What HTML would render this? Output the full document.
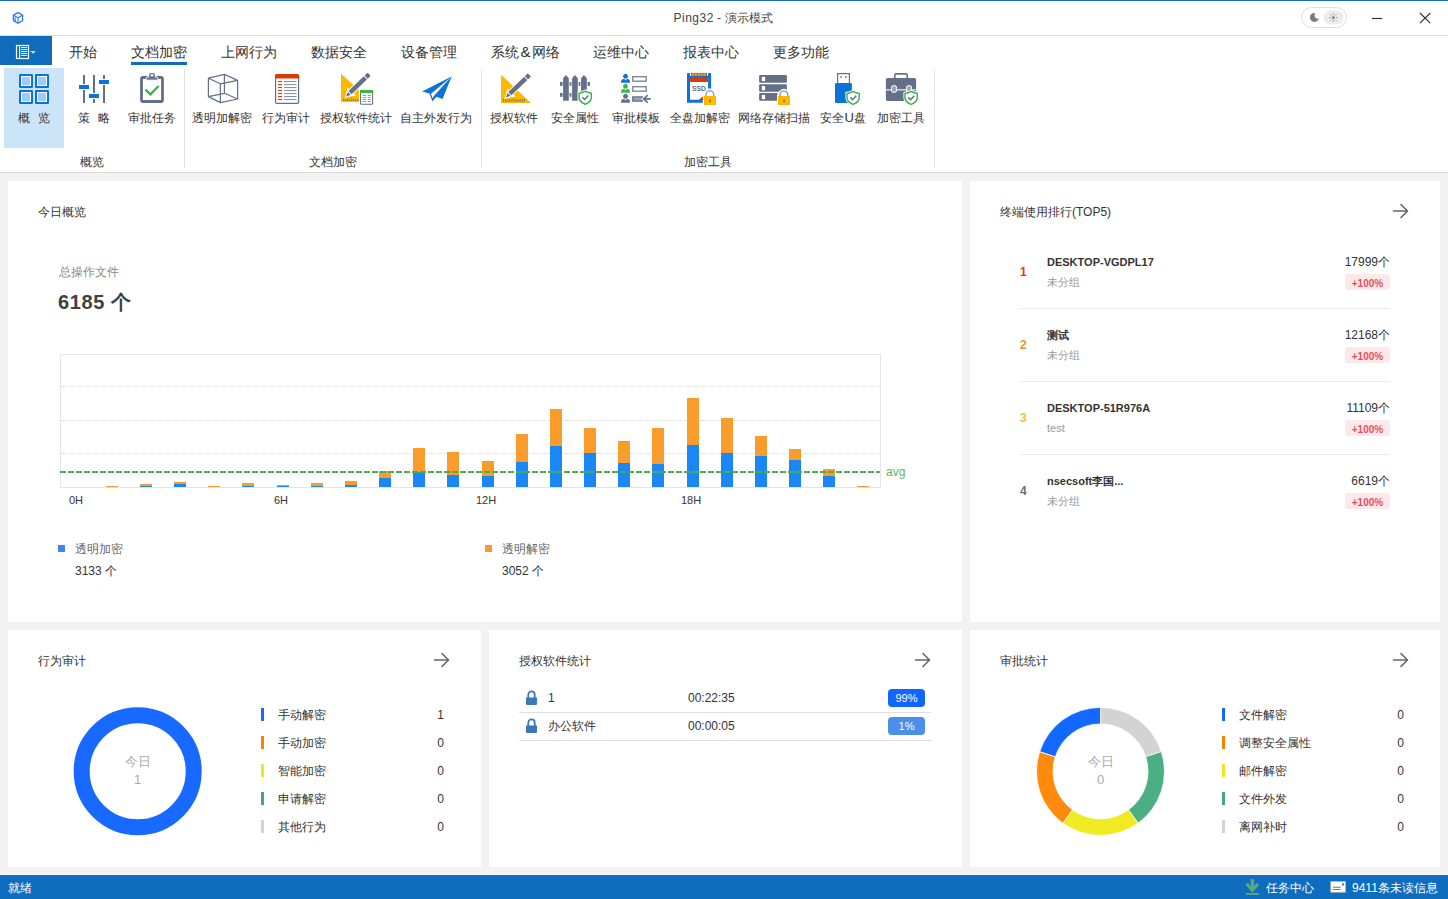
<!DOCTYPE html>
<html><head><meta charset="utf-8">
<style>
*{box-sizing:border-box}
body{margin:0;width:1448px;height:899px;position:relative;overflow:hidden;background:#f2f2f2;font-family:"Liberation Sans",sans-serif;color:#333}
.a{position:absolute}
.t{position:absolute;white-space:nowrap;font-size:12px;line-height:12px}
.card{position:absolute;background:#fff}
svg{position:absolute;overflow:visible}
</style></head><body>
<!-- title bar -->
<div class="a" style="left:0;top:0;width:1448px;height:35px;background:#fff;border-top:1px solid #1a6fc4"></div>
<div class="a" style="left:0;top:35px;width:1448px;height:1px;background:#dcdcdc"></div>
<div class="t" style="left:673.5px;top:12px;color:#444;letter-spacing:0.5px">Ping32</div><div class="t" style="left:717px;top:12px;color:#444">-</div><div class="t" style="left:724.5px;top:12px;color:#444">演示模式</div>
<!-- menu row + ribbon -->
<div class="a" style="left:0;top:36px;width:1448px;height:136px;background:#fff"></div>
<div class="a" style="left:0;top:172px;width:1448px;height:1px;background:#dadada"></div>
<div class="a" style="left:0;top:36px;width:52px;height:29px;background:#0f6cbd"></div>
<!-- tabs -->
<div class="t" style="left:69px;top:45px;font-size:14px;line-height:14px">开始</div>
<div class="t" style="left:131px;top:45px;font-size:14px;line-height:14px">文档加密</div>
<div class="a" style="left:131px;top:62px;width:56px;height:3px;background:#0f6cbd"></div>
<div class="t" style="left:221px;top:45px;font-size:14px;line-height:14px">上网行为</div>
<div class="t" style="left:311px;top:45px;font-size:14px;line-height:14px">数据安全</div>
<div class="t" style="left:401px;top:45px;font-size:14px;line-height:14px">设备管理</div>
<div class="t" style="left:491px;top:45px;font-size:14px;line-height:14px">系统</div><div class="t" style="left:520.5px;top:45px;font-size:15px;line-height:14px">&amp;</div><div class="t" style="left:531.5px;top:45px;font-size:14px;line-height:14px">网络</div>
<div class="t" style="left:593px;top:45px;font-size:14px;line-height:14px">运维中心</div>
<div class="t" style="left:683px;top:45px;font-size:14px;line-height:14px">报表中心</div>
<div class="t" style="left:773px;top:45px;font-size:14px;line-height:14px">更多功能</div>
<!-- ribbon -->
<div class="a" style="left:4px;top:68px;width:60px;height:80px;background:#cce4f7"></div>
<div class="a" style="left:184px;top:69px;width:1px;height:99px;background:#e2e2e2"></div>
<div class="a" style="left:481px;top:69px;width:1px;height:99px;background:#e2e2e2"></div>
<div class="a" style="left:934px;top:69px;width:1px;height:99px;background:#e2e2e2"></div>
<div class="t" style="left:18px;top:112px">概</div><div class="t" style="left:38px;top:112px">览</div>
<div class="t" style="left:78px;top:112px">策</div><div class="t" style="left:98px;top:112px">略</div>
<div class="t" style="left:128px;top:112px">审批任务</div>
<div class="t" style="left:80px;top:156px">概览</div>
<div class="t" style="left:192px;top:112px">透明加解密</div>
<div class="t" style="left:262px;top:112px">行为审计</div>
<div class="t" style="left:320px;top:112px">授权软件统计</div>
<div class="t" style="left:400px;top:112px">自主外发行为</div>
<div class="t" style="left:309px;top:156px">文档加密</div>
<div class="t" style="left:490px;top:112px">授权软件</div>
<div class="t" style="left:551px;top:112px">安全属性</div>
<div class="t" style="left:612px;top:112px">审批模板</div>
<div class="t" style="left:670px;top:112px">全盘加解密</div>
<div class="t" style="left:738px;top:112px">网络存储扫描</div>
<div class="t" style="left:820px;top:112px">安全</div><div class="t" style="left:844.5px;top:112px;font-size:13px">U</div><div class="t" style="left:854px;top:112px">盘</div>
<div class="t" style="left:877px;top:112px">加密工具</div>
<div class="t" style="left:684px;top:156px">加密工具</div>
<!--ICONS--><svg class="a" style="left:0;top:0" width="1448" height="899" viewBox="0 0 1448 899"><path d="M18 12.6L22.6 15.2V20.6L18 23.2L13.4 20.6V15.2Z" fill="none" stroke="#2b7cf0" stroke-width="1.3"/><path d="M13.6 15.3L18 17.8L22.4 15.3M18 17.8V23" fill="none" stroke="#2b7cf0" stroke-width="1.1"/><path d="M15.2 17.5V21.2" stroke="#2b7cf0" stroke-width="1.2"/><rect x="16.5" y="45.5" width="12" height="13" fill="none" stroke="#fff" stroke-width="1.2"/><line x1="19.6" y1="45.5" x2="19.6" y2="58.5" stroke="#fff" stroke-width="1.1"/><line x1="21" y1="47.5" x2="27.2" y2="47.5" stroke="#fff" stroke-width="0.9"/><line x1="21" y1="49.5" x2="27.2" y2="49.5" stroke="#fff" stroke-width="0.9"/><line x1="21" y1="51.5" x2="27.2" y2="51.5" stroke="#fff" stroke-width="0.9"/><line x1="21" y1="53.5" x2="27.2" y2="53.5" stroke="#fff" stroke-width="0.9"/><line x1="21" y1="55.5" x2="27.2" y2="55.5" stroke="#fff" stroke-width="0.9"/><path d="M30.3 51L35.9 51L33.1 53.9Z" fill="#fff" opacity="0.75"/><rect x="19" y="74" width="14" height="14" rx="1.2" fill="#0a72d8"/><rect x="21" y="76" width="10" height="10" fill="#fff"/><rect x="22" y="77" width="8" height="8" fill="#9bcbff"/><rect x="35" y="74" width="14" height="14" rx="1.2" fill="#0a72d8"/><rect x="37" y="76" width="10" height="10" fill="#fff"/><rect x="38" y="77" width="8" height="8" fill="#9bcbff"/><rect x="19" y="90" width="14" height="14" rx="1.2" fill="#0a72d8"/><rect x="21" y="92" width="10" height="10" fill="#fff"/><rect x="22" y="93" width="8" height="8" fill="#9bcbff"/><rect x="35" y="90" width="14" height="14" rx="1.2" fill="#0a72d8"/><rect x="37" y="92" width="10" height="10" fill="#fff"/><rect x="38" y="93" width="8" height="8" fill="#9bcbff"/><rect x="83" y="75" width="2" height="28" fill="#637087"/><rect x="93" y="75" width="2" height="28" fill="#637087"/><rect x="103" y="75" width="2" height="28" fill="#637087"/><rect x="79" y="84" width="10" height="6" fill="#fff"/><rect x="79" y="85" width="10" height="4" fill="#0a72d8"/><rect x="89" y="93" width="10" height="6" fill="#fff"/><rect x="89" y="94" width="10" height="4" fill="#0a72d8"/><rect x="99" y="79" width="10" height="6" fill="#fff"/><rect x="99" y="80" width="10" height="4" fill="#0a72d8"/><rect x="141.5" y="77.5" width="21" height="24" rx="1.5" fill="none" stroke="#637087" stroke-width="2.8"/><path d="M145.5 80.2H158.5L156.8 76.8H147.2Z" fill="#637087" stroke="#fff" stroke-width="1"/><rect x="149.8" y="73.6" width="4.4" height="3.6" rx="1.2" fill="none" stroke="#637087" stroke-width="1.4"/><path d="M145.4 89.6L150.4 94.4L158.6 86" fill="none" stroke="#3cb44b" stroke-width="2.4"/><path d="M224.4 74.4L208.4 78.2M208.4 78.2L220.4 83.8M220.4 83.8L237.6 80.4M237.6 80.4L224.4 74.4M208.4 78.2L208.4 96.6M220.4 83.8L220.4 102.6M237.6 80.4L237.6 99M224.4 74.4L224.4 93.3M208.4 96.6L220.4 102.6M220.4 102.6L237.6 99M237.6 99L224.4 93.3M224.4 93.3L208.4 96.6" fill="none" stroke="#637087" stroke-width="1.2" stroke-linecap="round"/><rect x="275.6" y="74.6" width="23" height="28.8" rx="1.2" fill="#fff" stroke="#637087" stroke-width="1.2"/><path d="M275 76.2Q275 74 277 74H297.2Q299.2 74 299.2 76.2V78.4H275Z" fill="#da3b01"/><rect x="278" y="81" width="4" height="1.1" fill="#da3b01"/><rect x="284" y="81" width="12.5" height="1.1" fill="#8592a5"/><rect x="278" y="84" width="4" height="1.1" fill="#da3b01"/><rect x="284" y="84" width="12.5" height="1.1" fill="#8592a5"/><rect x="278" y="87" width="4" height="1.1" fill="#da3b01"/><rect x="284" y="87" width="12.5" height="1.1" fill="#8592a5"/><rect x="278" y="90" width="4" height="1.1" fill="#da3b01"/><rect x="284" y="90" width="12.5" height="1.1" fill="#8592a5"/><rect x="278" y="93" width="4" height="1.1" fill="#da3b01"/><rect x="284" y="93" width="12.5" height="1.1" fill="#8592a5"/><rect x="278" y="96" width="4" height="1.1" fill="#da3b01"/><rect x="284" y="96" width="12.5" height="1.1" fill="#8592a5"/><rect x="278" y="99" width="4" height="1.1" fill="#da3b01"/><rect x="284" y="99" width="12.5" height="1.1" fill="#8592a5"/><path d="M341 73.8L359 90V102H341Z" fill="#ffb700"/><path d="M347.4 87.2L345.6 97.2L356 95.6Z" fill="#fff"/><rect x="343.3" y="98.4" width="0.9" height="2.6" fill="#637087"/><rect x="345.3" y="99" width="0.9" height="2" fill="#637087"/><rect x="347.3" y="99" width="0.9" height="2" fill="#637087"/><rect x="349.3" y="99" width="0.9" height="2" fill="#637087"/><rect x="351.3" y="98.4" width="0.9" height="2.6" fill="#637087"/><rect x="353.3" y="99" width="0.9" height="2" fill="#637087"/><rect x="355.3" y="99" width="0.9" height="2" fill="#637087"/><rect x="357.3" y="99" width="0.9" height="2" fill="#637087"/><g transform="translate(346 96.6) rotate(-44)"><path d="M0 0L5 -2.25H31.200000000000003Q32.2 -2.25 32.2 -1.25V1.25Q32.2 2.25 31.200000000000003 2.25H5Z" fill="#fff" stroke="#fff" stroke-width="2"/><path d="M0 0L5 -2.25H31.200000000000003Q32.2 -2.25 32.2 -1.25V1.25Q32.2 2.25 31.200000000000003 2.25H5Z" fill="#637087"/><rect x="4.6" y="-3" width="1" height="6" fill="#fff"/><rect x="27.000000000000004" y="-3" width="1" height="6" fill="#fff"/></g><rect x="359.6" y="89.6" width="14" height="15.6" fill="#fff"/><rect x="360.6" y="90.6" width="12" height="13.6" rx="1" fill="#fff" stroke="#637087" stroke-width="1.1"/><rect x="360" y="90" width="13.2" height="3" fill="#3cb44b"/><rect x="362.8" y="95" width="3.2" height="0.9" fill="#8592a5"/><rect x="367.6" y="95" width="3.2" height="0.9" fill="#8592a5"/><rect x="362.8" y="97" width="3.2" height="0.9" fill="#8592a5"/><rect x="367.6" y="97" width="3.2" height="0.9" fill="#8592a5"/><rect x="362.8" y="99" width="3.2" height="0.9" fill="#8592a5"/><rect x="367.6" y="99" width="3.2" height="0.9" fill="#8592a5"/><rect x="362.8" y="101" width="3.2" height="0.9" fill="#8592a5"/><rect x="367.6" y="101" width="3.2" height="0.9" fill="#8592a5"/><path d="M451.6 76.4L422.1 91.4L429.6 93.6L432.4 101.5L436.3 96.8L442.6 99.1Z" fill="#0a72d8"/><path d="M431 93.7L450.6 77.4L433.4 96.4L432.6 98.6Z" fill="#fff"/><path d="M501 74.8L531 103H501Z" fill="#ffb700"/><path d="M507.4 88.2L505.4 98L515.6 96.6Z" fill="#fff"/><rect x="503.2" y="98.8" width="0.9" height="3" fill="#637087"/><rect x="505.26" y="99.3" width="0.9" height="2.5" fill="#637087"/><rect x="507.32" y="99.3" width="0.9" height="2.5" fill="#637087"/><rect x="509.38" y="99.3" width="0.9" height="2.5" fill="#637087"/><rect x="511.44" y="99.3" width="0.9" height="2.5" fill="#637087"/><rect x="513.5" y="98.8" width="0.9" height="3" fill="#637087"/><rect x="515.56" y="99.3" width="0.9" height="2.5" fill="#637087"/><rect x="517.62" y="99.3" width="0.9" height="2.5" fill="#637087"/><rect x="519.68" y="99.3" width="0.9" height="2.5" fill="#637087"/><rect x="521.74" y="99.3" width="0.9" height="2.5" fill="#637087"/><rect x="523.8" y="98.8" width="0.9" height="3" fill="#637087"/><g transform="translate(505.8 97.6) rotate(-44)"><path d="M0 0L5 -2.25H31.799999999999997Q32.8 -2.25 32.8 -1.25V1.25Q32.8 2.25 31.799999999999997 2.25H5Z" fill="#fff" stroke="#fff" stroke-width="2"/><path d="M0 0L5 -2.25H31.799999999999997Q32.8 -2.25 32.8 -1.25V1.25Q32.8 2.25 31.799999999999997 2.25H5Z" fill="#637087"/><rect x="4.6" y="-3" width="1" height="6" fill="#fff"/><rect x="27.599999999999998" y="-3" width="1" height="6" fill="#fff"/></g><rect x="560" y="82" width="2.6" height="3.8" fill="#637087"/><rect x="560" y="93" width="2.6" height="3.8" fill="#637087"/><rect x="569.6" y="82" width="1.8" height="3.8" fill="#637087"/><rect x="569.6" y="93" width="1.8" height="3.8" fill="#637087"/><rect x="578.6" y="82" width="1.8" height="3.8" fill="#637087"/><rect x="578.6" y="93" width="1.8" height="3.8" fill="#637087"/><rect x="587.6" y="82" width="2.4" height="3.8" fill="#637087"/><rect x="587.6" y="93" width="2.4" height="3.8" fill="#637087"/><path d="M563.1 78.2L565.95 75.1L568.8000000000001 78.2V100.8H563.1Z" fill="#637087"/><path d="M572.1 78.2L574.95 75.1L577.8000000000001 78.2V100.8H572.1Z" fill="#637087"/><path d="M581.1 78.2L583.95 75.1L586.8000000000001 78.2V100.8H581.1Z" fill="#637087"/><g transform="translate(578.4 90.6)"><path d="M6.8 0.6C4.6 2 2.6 2.5 0.7 2.6V7C0.7 10.2 3.6 12.4 6.8 13.6C10 12.4 12.9 10.2 12.9 7V2.6C11 2.5 9 2 6.8 0.6Z" fill="#fff" stroke="#fff" stroke-width="3.2"/><path d="M6.8 0.6C4.6 2 2.6 2.5 0.7 2.6V7C0.7 10.2 3.6 12.4 6.8 13.6C10 12.4 12.9 10.2 12.9 7V2.6C11 2.5 9 2 6.8 0.6Z" fill="#fff" stroke="#3cb44b" stroke-width="1.5"/><path d="M4 6.6L6.3 8.9L10 5" fill="none" stroke="#637087" stroke-width="1.5"/></g><ellipse cx="625.5" cy="76.2" rx="2.4" ry="2.5" fill="#0a72d8"/><path d="M621 82.8V81.4Q621 79.2 623.4 79H627.6Q630 79.2 630 81.4V82.8Z" fill="#0a72d8"/><path d="M624.3 79L625.5 80.6L626.7 79Z" fill="#fff"/><ellipse cx="625.5" cy="86.2" rx="2.4" ry="2.5" fill="#3cb44b"/><path d="M621 92.8V91.4Q621 89.2 623.4 89H627.6Q630 89.2 630 91.4V92.8Z" fill="#3cb44b"/><path d="M624.3 89L625.5 90.6L626.7 89Z" fill="#fff"/><ellipse cx="625.5" cy="96.2" rx="2.4" ry="2.5" fill="#637087"/><path d="M621 102.8V101.4Q621 99.2 623.4 99H627.6Q630 99.2 630 101.4V102.8Z" fill="#637087"/><path d="M624.3 99L625.5 100.6L626.7 99Z" fill="#fff"/><rect x="632.8" y="76.7" width="13.4" height="4.5" fill="none" stroke="#7b879a" stroke-width="1.4"/><rect x="632.8" y="86.7" width="13.4" height="4.5" fill="none" stroke="#7b879a" stroke-width="1.4"/><path d="M632.8 96.9H642.4V101.1H632.8Z" fill="#9aa5b6" stroke="#637087" stroke-width="1.4"/><path d="M647.8 95.2L643.6 98.9L647.8 102.6M643.8 98.9H650.8" fill="none" stroke="#fff" stroke-width="3.4"/><path d="M647.8 95.2L643.6 98.9L647.8 102.6M643.8 98.9H650.8" fill="none" stroke="#637087" stroke-width="1.6"/><path d="M688.5 74.4V101.2H702.8" fill="none" stroke="#0a72d8" stroke-width="3"/><path d="M709.6 74.4V88.6" fill="none" stroke="#0a72d8" stroke-width="3"/><rect x="687" y="73" width="3" height="2" rx="0.8" fill="#0a72d8"/><rect x="708" y="73" width="3" height="2" rx="0.8" fill="#0a72d8"/><rect x="687" y="75.8" width="24" height="2.3" fill="#0a72d8"/><rect x="691" y="72.9" width="16" height="3.2" fill="#637087"/><rect x="692.0" y="73.6" width="2" height="2" fill="#ffb700"/><rect x="694.9" y="73.6" width="2" height="2" fill="#ffb700"/><rect x="697.8" y="73.6" width="2" height="2" fill="#ffb700"/><rect x="700.7" y="73.6" width="2" height="2" fill="#ffb700"/><rect x="703.6" y="73.6" width="2" height="2" fill="#ffb700"/><rect x="690" y="78" width="18" height="4" fill="#da3b01"/><text x="699" y="91" font-family="Liberation Sans" font-size="8" font-weight="bold" fill="#637087" text-anchor="middle" textLength="14" lengthAdjust="spacingAndGlyphs">SSD</text><path d="M698.5 100H703V96.5Z" fill="#da3b01"/><path d="M706 96.2V94.6A3 3 0 0 1 714 94.6V96.2" fill="none" stroke="#fff" stroke-width="3.6"/><rect x="703" y="95" width="14" height="11" fill="#fff"/><path d="M706 96.2V94.8A2.9 2.9 0 0 1 713.8 94.8V96.2" fill="none" stroke="#8d99ab" stroke-width="1.4"/><rect x="704" y="96" width="12" height="9" fill="#ffb700"/><rect x="709.4" y="99.3" width="1.4" height="3.2" rx="0.7" fill="#637087"/><rect x="759.1" y="75.1" width="27.8" height="7.6" rx="1" fill="#637087"/><rect x="761.8" y="76.89999999999999" width="3.3" height="4.2" fill="#fff"/><rect x="759.1" y="84.2" width="27.8" height="7.6" rx="1" fill="#637087"/><rect x="761.8" y="86.0" width="3.3" height="4.2" fill="#fff"/><rect x="759.1" y="93.1" width="18.5" height="7.6" rx="1" fill="#637087"/><rect x="761.8" y="94.89999999999999" width="3.3" height="4.2" fill="#fff"/><path d="M780 96.2V94.6A3 3 0 0 1 788 94.6V96.2" fill="none" stroke="#fff" stroke-width="3.6"/><rect x="777" y="95" width="14" height="11" fill="#fff"/><path d="M780 96.2V94.8A2.9 2.9 0 0 1 787.8 94.8V96.2" fill="none" stroke="#8d99ab" stroke-width="1.4"/><rect x="778" y="96" width="12" height="9" fill="#ffb700"/><rect x="783.4" y="99.3" width="1.4" height="3.2" rx="0.7" fill="#637087"/><rect x="837.6" y="73.6" width="11.8" height="10" fill="#fff" stroke="#637087" stroke-width="1.2"/><rect x="840.3" y="76.2" width="1.6" height="1.6" fill="#637087"/><rect x="845.2" y="76.2" width="1.6" height="1.6" fill="#637087"/><rect x="835" y="82.9" width="16.9" height="20.2" rx="1.4" fill="#0a72d8"/><g transform="translate(846.3 90.8)"><path d="M6.8 0.6C4.6 2 2.6 2.5 0.7 2.6V7C0.7 10.2 3.6 12.4 6.8 13.6C10 12.4 12.9 10.2 12.9 7V2.6C11 2.5 9 2 6.8 0.6Z" fill="#fff" stroke="#fff" stroke-width="3.2"/><path d="M6.8 0.6C4.6 2 2.6 2.5 0.7 2.6V7C0.7 10.2 3.6 12.4 6.8 13.6C10 12.4 12.9 10.2 12.9 7V2.6C11 2.5 9 2 6.8 0.6Z" fill="#fff" stroke="#3cb44b" stroke-width="1.5"/><path d="M4 6.6L6.3 8.9L10 5" fill="none" stroke="#637087" stroke-width="1.5"/></g><path d="M894.8 78.2V75.3Q894.8 73.9 896.2 73.9H905.8Q907.2 73.9 907.2 75.3V78.2" fill="none" stroke="#637087" stroke-width="1.6"/><rect x="885.9" y="77.9" width="30.2" height="23" rx="1.6" fill="#637087"/><rect x="885.9" y="89.3" width="30.2" height="1.1" fill="#fff"/><rect x="891.6" y="85.8" width="4.8" height="6.4" rx="1.2" fill="#9aa4b4" stroke="#fff" stroke-width="1"/><rect x="906.6" y="85.8" width="4.8" height="6.4" rx="1.2" fill="#9aa4b4" stroke="#fff" stroke-width="1"/><g transform="translate(904.3 90.8)"><path d="M6.8 0.6C4.6 2 2.6 2.5 0.7 2.6V7C0.7 10.2 3.6 12.4 6.8 13.6C10 12.4 12.9 10.2 12.9 7V2.6C11 2.5 9 2 6.8 0.6Z" fill="#fff" stroke="#fff" stroke-width="3.2"/><path d="M6.8 0.6C4.6 2 2.6 2.5 0.7 2.6V7C0.7 10.2 3.6 12.4 6.8 13.6C10 12.4 12.9 10.2 12.9 7V2.6C11 2.5 9 2 6.8 0.6Z" fill="#fff" stroke="#3cb44b" stroke-width="1.5"/><path d="M4 6.6L6.3 8.9L10 5" fill="none" stroke="#637087" stroke-width="1.5"/></g></svg>
<svg class="a" style="left:0;top:0" width="1448" height="899"><rect x="1301.5" y="7.5" width="45" height="20" rx="10" fill="#fff" stroke="#dedede" stroke-width="1"/><rect x="1323.5" y="10.4" width="20" height="14.2" rx="7.1" fill="#ececec"/><mask id="mm"><rect x="1300" y="5" width="30" height="25" fill="#fff"/><circle cx="1318.2" cy="15.2" r="3.6" fill="#000"/></mask><circle cx="1314.4" cy="17.4" r="4.5" fill="#7a7a7a" mask="url(#mm)"/><circle cx="1333.4" cy="17.5" r="1.6" fill="#8a8a8a"/><line x1="1336.00" y1="17.50" x2="1337.80" y2="17.50" stroke="#8a8a8a" stroke-width="0.8"/><line x1="1335.24" y1="19.34" x2="1336.51" y2="20.61" stroke="#8a8a8a" stroke-width="0.8"/><line x1="1333.40" y1="20.10" x2="1333.40" y2="21.90" stroke="#8a8a8a" stroke-width="0.8"/><line x1="1331.56" y1="19.34" x2="1330.29" y2="20.61" stroke="#8a8a8a" stroke-width="0.8"/><line x1="1330.80" y1="17.50" x2="1329.00" y2="17.50" stroke="#8a8a8a" stroke-width="0.8"/><line x1="1331.56" y1="15.66" x2="1330.29" y2="14.39" stroke="#8a8a8a" stroke-width="0.8"/><line x1="1333.40" y1="14.90" x2="1333.40" y2="13.10" stroke="#8a8a8a" stroke-width="0.8"/><line x1="1335.24" y1="15.66" x2="1336.51" y2="14.39" stroke="#8a8a8a" stroke-width="0.8"/><line x1="1372" y1="18.5" x2="1382.2" y2="18.5" stroke="#333" stroke-width="1.2"/><path d="M1420 13L1430.2 23.2M1430.2 13L1420 23.2" stroke="#333" stroke-width="1.2"/></svg>
<!--/ICONS-->
<!-- cards -->
<div class="card" style="left:8px;top:181px;width:954px;height:441px"></div>
<div class="card" style="left:970px;top:181px;width:470px;height:441px"></div>
<div class="card" style="left:8px;top:630px;width:473px;height:237px"></div>
<div class="card" style="left:489px;top:630px;width:473px;height:237px"></div>
<div class="card" style="left:970px;top:630px;width:470px;height:237px"></div>
<div class="t" style="left:38px;top:206px">今日概览</div>
<div class="t" style="left:59px;top:266px;color:#888">总操作文件</div>
<div class="t" style="left:58px;top:292px;font-size:20px;line-height:20px;font-weight:bold;color:#404040;letter-spacing:0.6px">6185 个</div>
<svg class="a" style="left:0;top:0" width="1448" height="899" viewBox="0 0 1448 899">
<rect x="60.5" y="354.5" width="820" height="133" fill="none" stroke="#e6e6e6" stroke-width="1"/>
<line x1="60" y1="386.5" x2="880" y2="386.5" stroke="#e3e3e3" stroke-width="1" stroke-dasharray="6 2"/>
<line x1="60" y1="420.5" x2="880" y2="420.5" stroke="#e3e3e3" stroke-width="1" stroke-dasharray="6 2"/>
<line x1="60" y1="453.5" x2="880" y2="453.5" stroke="#e3e3e3" stroke-width="1" stroke-dasharray="6 2"/>
<line x1="60" y1="487.5" x2="880" y2="487.5" stroke="#e3e3e3" stroke-width="1" stroke-dasharray="6 2"/>
<rect x="106" y="486" width="12" height="1" fill="#fa9c2b"/>
<rect x="140" y="486" width="12" height="1" fill="#1a87f5"/>
<rect x="140" y="484" width="12" height="2" fill="#fa9c2b"/>
<rect x="174" y="484" width="12" height="3" fill="#1a87f5"/>
<rect x="174" y="482" width="12" height="2" fill="#fa9c2b"/>
<rect x="208" y="486" width="12" height="1" fill="#fa9c2b"/>
<rect x="242" y="486" width="12" height="1" fill="#1a87f5"/>
<rect x="242" y="483" width="12" height="3" fill="#fa9c2b"/>
<rect x="277" y="486" width="12" height="1" fill="#1a87f5"/>
<rect x="277" y="485" width="12" height="1" fill="#fa9c2b"/>
<rect x="311" y="486" width="12" height="1" fill="#1a87f5"/>
<rect x="311" y="483" width="12" height="3" fill="#fa9c2b"/>
<rect x="345" y="485" width="12" height="2" fill="#1a87f5"/>
<rect x="345" y="481" width="12" height="4" fill="#fa9c2b"/>
<rect x="379" y="478" width="12" height="9" fill="#1a87f5"/>
<rect x="379" y="471" width="12" height="7" fill="#fa9c2b"/>
<rect x="413" y="471.5" width="12" height="15.5" fill="#1a87f5"/>
<rect x="413" y="448" width="12" height="23.5" fill="#fa9c2b"/>
<rect x="447" y="475" width="12" height="12" fill="#1a87f5"/>
<rect x="447" y="452" width="12" height="23" fill="#fa9c2b"/>
<rect x="482" y="476" width="12" height="11" fill="#1a87f5"/>
<rect x="482" y="461" width="12" height="15" fill="#fa9c2b"/>
<rect x="516" y="462" width="12" height="25" fill="#1a87f5"/>
<rect x="516" y="434" width="12" height="28" fill="#fa9c2b"/>
<rect x="550" y="446" width="12" height="41" fill="#1a87f5"/>
<rect x="550" y="409" width="12" height="37" fill="#fa9c2b"/>
<rect x="584" y="453" width="12" height="34" fill="#1a87f5"/>
<rect x="584" y="428" width="12" height="25" fill="#fa9c2b"/>
<rect x="618" y="463" width="12" height="24" fill="#1a87f5"/>
<rect x="618" y="441" width="12" height="22" fill="#fa9c2b"/>
<rect x="652" y="464" width="12" height="23" fill="#1a87f5"/>
<rect x="652" y="428" width="12" height="36" fill="#fa9c2b"/>
<rect x="687" y="445" width="12" height="42" fill="#1a87f5"/>
<rect x="687" y="398" width="12" height="47" fill="#fa9c2b"/>
<rect x="721" y="453" width="12" height="34" fill="#1a87f5"/>
<rect x="721" y="418" width="12" height="35" fill="#fa9c2b"/>
<rect x="755" y="456" width="12" height="31" fill="#1a87f5"/>
<rect x="755" y="436" width="12" height="20" fill="#fa9c2b"/>
<rect x="789" y="460" width="12" height="27" fill="#1a87f5"/>
<rect x="789" y="449" width="12" height="11" fill="#fa9c2b"/>
<rect x="823" y="476" width="12" height="11" fill="#1a87f5"/>
<rect x="823" y="469" width="12" height="7" fill="#fa9c2b"/>
<rect x="857" y="486" width="12" height="1" fill="#fa9c2b"/>
<line x1="60" y1="472" x2="880" y2="472" stroke="#4cae4c" stroke-width="2" stroke-dasharray="6 2"/>
</svg>
<div class="t" style="left:69px;top:495px;font-size:11px;line-height:11px">0H</div>
<div class="t" style="left:274px;top:495px;font-size:11px;line-height:11px">6H</div>
<div class="t" style="left:476px;top:495px;font-size:11px;line-height:11px">12H</div>
<div class="t" style="left:681px;top:495px;font-size:11px;line-height:11px">18H</div>
<div class="t" style="left:886px;top:466px;color:#5cb85c">avg</div>
<div class="a" style="left:58px;top:545px;width:7px;height:7px;background:#3d85f5"></div>
<div class="t" style="left:75px;top:543px;color:#666">透明加密</div>
<div class="t" style="left:75px;top:565px">3133 个</div>
<div class="a" style="left:485px;top:545px;width:7px;height:7px;background:#f39b35"></div>
<div class="t" style="left:502px;top:543px;color:#666">透明解密</div>
<div class="t" style="left:502px;top:565px">3052 个</div>

<div class="t" style="left:1000px;top:206px">终端使用排行(TOP5)</div>
<div class="t" style="left:1020px;top:266px;font-weight:bold;color:#e8332f">1</div>
<div class="t" style="left:1047px;top:257px;font-size:11px;line-height:11px;font-weight:bold;color:#333">DESKTOP-VGDPL17</div>
<div class="t" style="left:1047px;top:277px;font-size:11px;line-height:11px;color:#999">未分组</div>
<div class="t" style="right:58px;top:256px;text-align:right">17999个</div>
<div class="a" style="left:1345px;top:274px;width:45px;height:16px;background:#fde8ea;border-radius:3px"></div>
<div class="t" style="left:1345px;top:279px;width:45px;text-align:center;font-size:10px;line-height:10px;font-weight:bold;color:#e6505f">+100%</div>
<div class="a" style="left:1020px;top:308px;width:370px;height:1px;background:#ebebeb"></div>
<div class="t" style="left:1020px;top:339px;font-weight:bold;color:#f0932b">2</div>
<div class="t" style="left:1047px;top:330px;font-size:11px;line-height:11px;font-weight:bold;color:#333">测试</div>
<div class="t" style="left:1047px;top:350px;font-size:11px;line-height:11px;color:#999">未分组</div>
<div class="t" style="right:58px;top:329px;text-align:right">12168个</div>
<div class="a" style="left:1345px;top:347px;width:45px;height:16px;background:#fde8ea;border-radius:3px"></div>
<div class="t" style="left:1345px;top:352px;width:45px;text-align:center;font-size:10px;line-height:10px;font-weight:bold;color:#e6505f">+100%</div>
<div class="a" style="left:1020px;top:381px;width:370px;height:1px;background:#ebebeb"></div>
<div class="t" style="left:1020px;top:412px;font-weight:bold;color:#f7c232">3</div>
<div class="t" style="left:1047px;top:403px;font-size:11px;line-height:11px;font-weight:bold;color:#333">DESKTOP-51R976A</div>
<div class="t" style="left:1047px;top:423px;font-size:11px;line-height:11px;color:#999">test</div>
<div class="t" style="right:58px;top:402px;text-align:right">11109个</div>
<div class="a" style="left:1345px;top:420px;width:45px;height:16px;background:#fde8ea;border-radius:3px"></div>
<div class="t" style="left:1345px;top:425px;width:45px;text-align:center;font-size:10px;line-height:10px;font-weight:bold;color:#e6505f">+100%</div>
<div class="a" style="left:1020px;top:454px;width:370px;height:1px;background:#ebebeb"></div>
<div class="t" style="left:1020px;top:485px;font-weight:bold;color:#6e6e6e">4</div>
<div class="t" style="left:1047px;top:476px;font-size:11px;line-height:11px;font-weight:bold;color:#333">nsecsoft李国...</div>
<div class="t" style="left:1047px;top:496px;font-size:11px;line-height:11px;color:#999">未分组</div>
<div class="t" style="right:58px;top:475px;text-align:right">6619个</div>
<div class="a" style="left:1345px;top:493px;width:45px;height:16px;background:#fde8ea;border-radius:3px"></div>
<div class="t" style="left:1345px;top:498px;width:45px;text-align:center;font-size:10px;line-height:10px;font-weight:bold;color:#e6505f">+100%</div>
<svg class="a" style="left:0;top:0" width="1448" height="899"><path d="M1393.5 211H1407.0M1401.0 204.5L1407.5 211L1401.0 217.5" fill="none" stroke="#666" stroke-width="1.6" stroke-linecap="round" stroke-linejoin="round"/><path d="M434.5 660H448.0M442.0 653.5L448.5 660L442.0 666.5" fill="none" stroke="#666" stroke-width="1.6" stroke-linecap="round" stroke-linejoin="round"/><path d="M915.5 660H929.0M923.0 653.5L929.5 660L923.0 666.5" fill="none" stroke="#666" stroke-width="1.6" stroke-linecap="round" stroke-linejoin="round"/><path d="M1393.5 660H1407.0M1401.0 653.5L1407.5 660L1401.0 666.5" fill="none" stroke="#666" stroke-width="1.6" stroke-linecap="round" stroke-linejoin="round"/></svg>

<div class="t" style="left:38px;top:655px">行为审计</div>
<svg class="a" style="left:0;top:0" width="1448" height="899"><circle cx="137.7" cy="771.2" r="56" fill="none" stroke="#1769ff" stroke-width="16"/></svg>
<div class="t" style="left:107.7px;top:754.8px;width:60px;text-align:center;font-size:13px;line-height:13px;color:#aaa">今日</div>
<div class="t" style="left:107.7px;top:773px;width:60px;text-align:center;font-size:13px;line-height:13px;color:#aaa">1</div>
<div class="a" style="left:261px;top:708px;width:3px;height:13px;background:#1769ff"></div>
<div class="t" style="left:278px;top:709px">手动解密</div>
<div class="t" style="left:420.5px;top:709px;width:40px;text-align:center">1</div>
<div class="a" style="left:261px;top:736px;width:3px;height:13px;background:#ff8000"></div>
<div class="t" style="left:278px;top:737px">手动加密</div>
<div class="t" style="left:420.5px;top:737px;width:40px;text-align:center">0</div>
<div class="a" style="left:261px;top:764px;width:3px;height:13px;background:#f3e51c"></div>
<div class="t" style="left:278px;top:765px">智能加密</div>
<div class="t" style="left:420.5px;top:765px;width:40px;text-align:center">0</div>
<div class="a" style="left:261px;top:792px;width:3px;height:13px;background:#44a878"></div>
<div class="t" style="left:278px;top:793px">申请解密</div>
<div class="t" style="left:420.5px;top:793px;width:40px;text-align:center">0</div>
<div class="a" style="left:261px;top:820px;width:3px;height:13px;background:#d3d3d3"></div>
<div class="t" style="left:278px;top:821px">其他行为</div>
<div class="t" style="left:420.5px;top:821px;width:40px;text-align:center">0</div>
<div class="t" style="left:519px;top:655px">授权软件统计</div>
<svg class="a" style="left:526px;top:690px" width="11" height="15"><path d="M0 7.5h11v6.2a1.3 1.3 0 0 1-1.3 1.3H1.3A1.3 1.3 0 0 1 0 13.7z" fill="#3b78b8"/><path d="M2.3 8V4.6a3.2 3.2 0 0 1 6.4 0V8" fill="none" stroke="#3b78b8" stroke-width="1.8"/></svg>
<div class="t" style="left:548px;top:692px">1</div>
<div class="t" style="left:688px;top:692px">00:22:35</div>
<div class="a" style="left:888px;top:689px;width:37px;height:18px;background:#1166ff;border-radius:4px"></div>
<div class="t" style="left:888px;top:693px;width:37px;text-align:center;font-size:11px;line-height:11px;color:#fff">99%</div>
<div class="a" style="left:519px;top:712px;width:412px;height:1px;background:#e0e0e0"></div>
<svg class="a" style="left:526px;top:718px" width="11" height="15"><path d="M0 7.5h11v6.2a1.3 1.3 0 0 1-1.3 1.3H1.3A1.3 1.3 0 0 1 0 13.7z" fill="#3b78b8"/><path d="M2.3 8V4.6a3.2 3.2 0 0 1 6.4 0V8" fill="none" stroke="#3b78b8" stroke-width="1.8"/></svg>
<div class="t" style="left:548px;top:720px">办公软件</div>
<div class="t" style="left:688px;top:720px">00:00:05</div>
<div class="a" style="left:888px;top:717px;width:37px;height:18px;background:#4a8fe9;border-radius:4px"></div>
<div class="t" style="left:888px;top:721px;width:37px;text-align:center;font-size:11px;line-height:11px;color:#fff">1%</div>
<div class="a" style="left:519px;top:740px;width:412px;height:1px;background:#e0e0e0"></div>
<div class="t" style="left:1000px;top:655px">审批统计</div>
<svg class="a" style="left:0;top:0" width="1448" height="899"><path d="M1100.50 707.40A64 64 0 0 1 1161.37 751.62L1145.68 756.72A47.5 47.5 0 0 0 1100.50 723.90Z" fill="#d3d3d3" stroke="#fff" stroke-width="0.8"/><path d="M1161.37 751.62A64 64 0 0 1 1138.12 823.18L1128.42 809.83A47.5 47.5 0 0 0 1145.68 756.72Z" fill="#4caf84" stroke="#fff" stroke-width="0.8"/><path d="M1138.12 823.18A64 64 0 0 1 1062.88 823.18L1072.58 809.83A47.5 47.5 0 0 0 1128.42 809.83Z" fill="#f0ea22" stroke="#fff" stroke-width="0.8"/><path d="M1062.88 823.18A64 64 0 0 1 1039.63 751.62L1055.32 756.72A47.5 47.5 0 0 0 1072.58 809.83Z" fill="#ff8a0b" stroke="#fff" stroke-width="0.8"/><path d="M1039.63 751.62A64 64 0 0 1 1100.50 707.40L1100.50 723.90A47.5 47.5 0 0 0 1055.32 756.72Z" fill="#1368ff" stroke="#fff" stroke-width="0.8"/></svg>
<div class="t" style="left:1070.5px;top:754.8px;width:60px;text-align:center;font-size:13px;line-height:13px;color:#aaa">今日</div>
<div class="t" style="left:1070.5px;top:773px;width:60px;text-align:center;font-size:13px;line-height:13px;color:#aaa">0</div>
<div class="a" style="left:1222px;top:708px;width:3px;height:13px;background:#1368ff"></div>
<div class="t" style="left:1239px;top:709px">文件解密</div>
<div class="t" style="left:1380.5px;top:709px;width:40px;text-align:center">0</div>
<div class="a" style="left:1222px;top:736px;width:3px;height:13px;background:#ff8000"></div>
<div class="t" style="left:1239px;top:737px">调整安全属性</div>
<div class="t" style="left:1380.5px;top:737px;width:40px;text-align:center">0</div>
<div class="a" style="left:1222px;top:764px;width:3px;height:13px;background:#f3e51c"></div>
<div class="t" style="left:1239px;top:765px">邮件解密</div>
<div class="t" style="left:1380.5px;top:765px;width:40px;text-align:center">0</div>
<div class="a" style="left:1222px;top:792px;width:3px;height:13px;background:#44a878"></div>
<div class="t" style="left:1239px;top:793px">文件外发</div>
<div class="t" style="left:1380.5px;top:793px;width:40px;text-align:center">0</div>
<div class="a" style="left:1222px;top:820px;width:3px;height:13px;background:#d3d3d3"></div>
<div class="t" style="left:1239px;top:821px">离网补时</div>
<div class="t" style="left:1380.5px;top:821px;width:40px;text-align:center">0</div>

<!-- status bar -->
<div class="a" style="left:0;top:874px;width:1448px;height:1px;background:#fbfaf5"></div>
<div class="a" style="left:0;top:875px;width:1448px;height:24px;background:#0f6dbf"></div>
<div class="t" style="left:8px;top:882px;color:#fff">就绪</div>
<div class="t" style="left:1266px;top:882px;color:#fff">任务中心</div>
<div class="t" style="left:1352px;top:882px;color:#fff">9411条未读信息</div>
<!--STATUS--><svg class="a" style="left:0;top:0" width="1448" height="899"><rect x="1250.6" y="879" width="3.4" height="9" fill="#5aa77a"/><path d="M1246.6 883.8L1252.3 890.4L1258 883.8" fill="none" stroke="#5aa77a" stroke-width="3.2"/><rect x="1246" y="893" width="13" height="1.9" fill="#5aa77a"/><rect x="1330.8" y="881.6" width="14.6" height="10.6" fill="#fff" stroke="#b9c0c8" stroke-width="0.8"/><rect x="1333" y="886.8" width="7.7" height="0.9" fill="#5a6a80"/><rect x="1333" y="889.1" width="7.7" height="0.9" fill="#5a6a80"/><rect x="1342.2" y="883.2" width="1.6" height="2.4" fill="#1a6fe0"/></svg>
<!--/STATUS-->
</body></html>
